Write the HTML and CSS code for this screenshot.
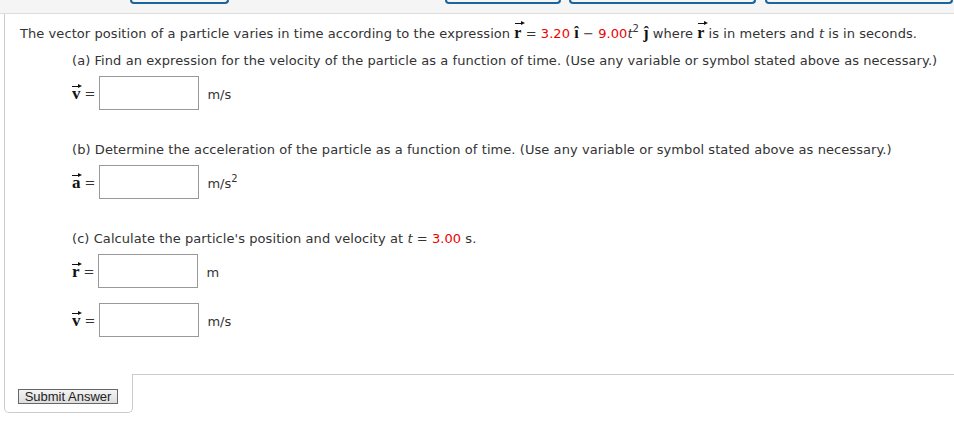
FILE: index.html
```html
<!DOCTYPE html>
<html>
<head>
<meta charset="utf-8">
<link rel="stylesheet" href="styles.css">
</head>
<body>
<div class="topbar">
  <div class="tab tab1"></div>
  <div class="tab tab2"></div>
  <div class="tab tab3"></div>
  <div class="tab tab4"></div>
</div>
<div class="question">
  <p class="intro">The vector position of a particle varies in time according to the expression <span class="vec">r</span> = <span class="red">3.20</span> <span class="unitvec">î</span> − <span class="red">9.00</span><i>t</i><sup>2</sup> <span class="unitvec">ĵ</span> where <span class="vec">r</span> is in meters and <i>t</i> is in seconds.</p>
  <div class="part">
    <p class="prompt">(a) Find an expression for the velocity of the particle as a function of time. (Use any variable or symbol stated above as necessary.)</p>
    <div class="answer"><span class="vec">v</span><span class="eq">=</span><span class="box"></span><span class="unit">m/s</span></div>
  </div>
  <div class="part">
    <p class="prompt">(b) Determine the acceleration of the particle as a function of time. (Use any variable or symbol stated above as necessary.)</p>
    <div class="answer"><span class="vec">a</span><span class="eq">=</span><span class="box"></span><span class="unit">m/s<sup>2</sup></span></div>
  </div>
  <div class="part">
    <p class="prompt">(c) Calculate the particle's position and velocity at <i>t</i> = <span class="red">3.00</span> s.</p>
    <div class="answer"><span class="vec">r</span><span class="eq">=</span><span class="box"></span><span class="unit">m</span></div>
    <div class="answer second"><span class="vec">v</span><span class="eq">=</span><span class="box"></span><span class="unit">m/s</span></div>
  </div>
</div>
<div class="submit-row">
  <div class="submit-cell"><button class="submit">Submit Answer</button></div>
  <div class="filler"></div>
</div>
</body>
</html>
```
FILE: styles.css
```css
* { box-sizing: border-box; }
html, body { margin: 0; padding: 0; background: #fff; }
body {
  font-family: "DejaVu Sans", Verdana, sans-serif;
  font-size: 13px;
  color: #333;
  width: 954px;
  height: 421px;
  overflow: hidden;
}
.topbar {
  height: 14px;
  background: #f5f5f5;
  border-bottom: 1px solid #ddd;
  display: flex;
  align-items: flex-start;
}
.tab {
  height: 4px;
  border: 2px solid #1b659c;
  border-top: none;
  border-radius: 0 0 5px 5px;
}
.tab1 { margin-left: 130px; width: 99px; }
.tab2 { margin-left: 216px; width: 116px; }
.tab3 { margin-left: 8px; width: 187px; }
.tab4 { margin-left: 9px; width: 188px; }

.question {
  margin-left: 4px;
  border-left: 1px solid #ccc;
  padding: 11px 0 37px 15px;
}
p { margin: 0; line-height: 16px; white-space: nowrap; letter-spacing: 0.07px; }
.part { margin-left: 52px; }
.intro + .part { margin-top: 11px; }
.part + .part { margin-top: 32px; }
.answer {
  margin-top: 7px;
  display: flex;
  align-items: center;
  height: 34px;
}
.answer.second { margin-top: 15px; }
.red { color: #e00; }
sup { font-size: 10px; vertical-align: 6px; line-height: 0; }
i { font-style: italic; }
.vec {
  position: relative;
  display: inline-block;
  font-family: "Liberation Serif", "Times New Roman", serif;
  font-weight: bold;
  font-size: 17px;
  line-height: 19px;
  color: #111;
  letter-spacing: 0;
}
.intro .vec { font-size: 16px; line-height: 16px; }
.vec::before {
  content: "";
  position: absolute;
  left: 0;
  top: 2px;
  width: 8px;
  height: 1px;
  background: #111;
}
.vec::after {
  content: "";
  position: absolute;
  left: 6px;
  top: 0;
  width: 0;
  height: 0;
  border-left: 4px solid #111;
  border-top: 2.5px solid transparent;
  border-bottom: 2.5px solid transparent;
}
.intro .vec::before { top: -2px; left: 1px; }
.intro .vec::after { top: -4px; left: 7px; }
.unitvec {
  font-family: "Liberation Serif", "Times New Roman", serif;
  font-weight: bold;
  font-size: 16px;
  color: #111;
}
.eq { margin: 0 4px 0 4px; }
.box {
  width: 100px;
  height: 34px;
  border: 1px solid #999;
  background: #fff;
}
.unit { margin-left: 8px; margin-top: 3px; }

.submit-row { display: flex; }
.submit-cell {
  margin-left: 4px;
  width: 129px;
  height: 39px;
  border: 1px solid #ccc;
  border-top: none;
  border-radius: 0 0 5px 5px;
  padding: 15px 0 0 13px;
}
.filler { flex: 1; border-top: 1px solid #ccc; margin-left: -1px; }
.submit {
  font-family: "Liberation Sans", Arial, sans-serif;
  font-size: 13px;
  color: #222;
  height: 15px;
  width: 100px;
  padding: 0;
  line-height: 13px;
  border: 1px solid #666;
  background: linear-gradient(#f4f4f4, #ddd);
  border-radius: 0;
}
```
